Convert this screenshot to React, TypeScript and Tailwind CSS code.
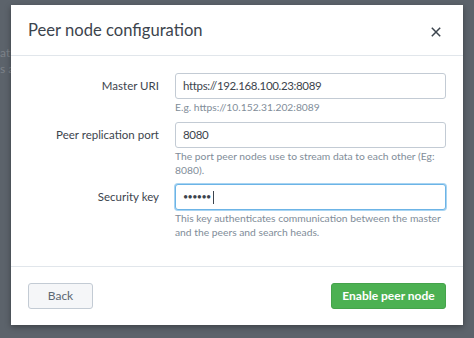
import React from 'react';

type FieldProps = {
  label: string;
  value: string;
  help: string;
  focused?: boolean;
  password?: boolean;
};

const Field: React.FC<FieldProps> = ({ label, value, help, focused, password }) => {
  return (
    <div className="grid grid-cols-[131px_271px] gap-x-4">
      <label className="text-right text-[11.5px] leading-[26px] text-[#3c444d]">{label}</label>
      <div>
        <div
          className={
            focused
              ? 'h-[26px] rounded-[3px] border border-[#6cb4e6] shadow-[0_0_0_1px_#a8d4f2] bg-white flex items-center px-[7px]'
              : 'h-[26px] rounded-[3px] border border-[#c3cbd4] bg-white flex items-center px-[7px]'
          }
        >
          {password ? (
            <span className="flex items-center text-[9px] text-[#3c444d] tracking-[-0.6px]">
              {value}
              <span className="ml-[2px] inline-block w-px h-[13px] bg-[#3c444d]" />
            </span>
          ) : (
            <span className="text-[11.5px] text-[#3c444d] tracking-[-0.35px]">{value}</span>
          )}
        </div>
        <p className="mt-[1px] text-[10.3px] leading-[14px] text-[#818d99]">{help}</p>
      </div>
    </div>
  );
};

export default function App() {
  return (
    <div className="relative w-[474px] h-[338px] overflow-hidden bg-[#5c636b] font-['Lato','Liberation_Sans',sans-serif]">
      {/* dimmed page text behind the overlay */}
      <div className="absolute left-0 top-[45px] text-[12px] leading-[16px] text-[#7c8289]">
        <div>at</div>
        <div>s a</div>
      </div>

      <div className="relative ml-[11px] mt-[5px] w-[452px] h-[320px] bg-white shadow-[0_2px_6px_rgba(0,0,0,0.35)] flex flex-col">
        <div className="h-[51px] shrink-0 border-b border-[#e1e6eb] flex items-center justify-between pl-[17px] pr-[22px]">
          <h1 className="text-[16.6px] text-[#3c444d]">Peer node configuration</h1>
          <button className="mt-[4px] text-[#3c444d]">
            <svg width="10" height="10" viewBox="0 0 10 10" fill="none" stroke="currentColor" strokeWidth="1.5">
              <path d="M0.8 0.8L9.2 9.2M9.2 0.8L0.8 9.2" />
            </svg>
          </button>
        </div>

        <div className="flex-1 pt-[17px] pl-[17px] flex flex-col">
          <div className="mb-[8px]">
            <Field label="Master URI" value="https://192.168.100.23:8089" help="E.g. https://10.152.31.202:8089" />
          </div>
          <div className="mb-[7px]">
            <Field
              label="Peer replication port"
              value="8080"
              help="The port peer nodes use to stream data to each other (Eg: 8080)."
            />
          </div>
          <Field
            label="Security key"
            value="••••••"
            password
            focused
            help="This key authenticates communication between the master and the peers and search heads."
          />
        </div>

        <div className="h-[59px] shrink-0 border-t border-[#e1e6eb] flex items-start justify-between px-[17px] pt-[16px]">
          <button className="w-[65px] h-[26px] rounded-[3px] border border-[#c3cbd4] bg-[#f5f6f8] text-[12px] text-[#5c6773]">
            Back
          </button>
          <button className="w-[115px] h-[26px] rounded-[3px] bg-[#4cb152] border border-[#45a34b] text-[12px] font-bold text-white">
            Enable peer node
          </button>
        </div>
      </div>
    </div>
  );
}
